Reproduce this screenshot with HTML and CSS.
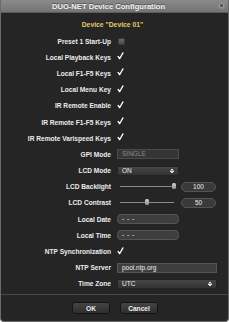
FILE: index.html
```html
<!DOCTYPE html>
<html lang="en">

<head>
  <meta charset="UTF-8">
  <meta name="viewport" content="width=device-width, initial-scale=1.0">
  <title>DUO-NET Device Configuration</title>
  <link rel="stylesheet" href="styles.css">
</head>

<body>
  <div class="window">
    <div class="titlebar">
      <span class="title">DUO-NET Device Configuration</span>
      <span class="close"></span>
    </div>
    <div class="content">
      <div class="device-name">Device "Device 01"</div>

      <div class="row">
        <label>Preset 1 Start-Up</label>
        <span class="box"></span>
      </div>
      <div class="row">
        <label>Local Playback Keys</label>
        <svg class="check" viewBox="0 0 8 9"><path d="M1.2 5 L3 7.6 L6.8 1" /></svg>
      </div>
      <div class="row">
        <label>Local F1-F5 Keys</label>
        <svg class="check" viewBox="0 0 8 9"><path d="M1.2 5 L3 7.6 L6.8 1" /></svg>
      </div>
      <div class="row">
        <label>Local Menu Key</label>
        <svg class="check" viewBox="0 0 8 9"><path d="M1.2 5 L3 7.6 L6.8 1" /></svg>
      </div>
      <div class="row">
        <label>IR Remote Enable</label>
        <svg class="check" viewBox="0 0 8 9"><path d="M1.2 5 L3 7.6 L6.8 1" /></svg>
      </div>
      <div class="row">
        <label>IR Remote F1-F5 Keys</label>
        <svg class="check" viewBox="0 0 8 9"><path d="M1.2 5 L3 7.6 L6.8 1" /></svg>
      </div>
      <div class="row">
        <label>IR Remote Varispeed Keys</label>
        <svg class="check" viewBox="0 0 8 9"><path d="M1.2 5 L3 7.6 L6.8 1" /></svg>
      </div>

      <div class="row">
        <label>GPI Mode</label>
        <div class="field short disabled">SINGLE</div>
      </div>
      <div class="row">
        <label>LCD Mode</label>
        <div class="field short select">ON<span class="arrows"></span></div>
      </div>
      <div class="row">
        <label>LCD Backlight</label>
        <div class="slider"><span class="thumb" style="left: 100%"></span></div>
        <div class="value">100</div>
      </div>
      <div class="row">
        <label>LCD Contrast</label>
        <div class="slider"><span class="thumb" style="left: 50%"></span></div>
        <div class="value">50</div>
      </div>
      <div class="row">
        <label>Local Date</label>
        <div class="field short round">- - -</div>
      </div>
      <div class="row">
        <label>Local Time</label>
        <div class="field short round">- - -</div>
      </div>
      <div class="row">
        <label>NTP Synchronization</label>
        <svg class="check" viewBox="0 0 8 9"><path d="M1.2 5 L3 7.6 L6.8 1" /></svg>
      </div>
      <div class="row">
        <label>NTP Server</label>
        <div class="field long">pool.ntp.org</div>
      </div>
      <div class="row">
        <label>Time Zone</label>
        <div class="field long select">UTC<span class="arrows"></span></div>
      </div>
    </div>
    <div class="footer">
      <button>OK</button>
      <button>Cancel</button>
    </div>
  </div>
</body>

</html>
```

FILE: styles.css
```css
body {
  margin: 0;
  padding: 0;
  background-color: #ffffff;
  font-family: 'Liberation Sans', Arial, sans-serif;
}

.window {
  width: 229px;
  height: 322px;
  box-sizing: border-box;
  background-color: #252525;
  border: 1px solid #6a6a6a;
  border-top: none;
  border-radius: 0 0 4px 4px;
  display: flex;
  flex-direction: column;
  overflow: hidden;
}

.titlebar {
  height: 12px;
  background: linear-gradient(#8a8a8a, #747474);
  border-bottom: 1px solid #5a5a5a;
  display: flex;
  align-items: center;
  justify-content: center;
  position: relative;
}

.title {
  color: #f2f2f2;
  font-size: 7.6px;
  font-weight: bold;
  text-shadow: 0 -1px 0 #555;
  margin-left: -12px;
}

.close {
  position: absolute;
  right: 3px;
  top: 2px;
  width: 7px;
  height: 7px;
  border-radius: 50%;
  background: radial-gradient(#5c5c5c 35%, #9a9a9a 40%, #6c6c6c 100%);
}

.content {
  flex: 1;
}

.device-name {
  color: #e4c96a;
  font-size: 6.8px;
  font-weight: bold;
  text-align: center;
  padding-top: 8px;
  height: 12px;
  line-height: 8px;
  margin-left: -4px;
}

.row {
  display: flex;
  align-items: center;
  height: 16.2px;
}

.row label {
  width: 110px;
  text-align: right;
  color: #ececec;
  font-size: 6.6px;
  font-weight: bold;
  padding-right: 6px;
  white-space: nowrap;
}

.box {
  width: 5px;
  height: 5px;
  margin-left: 1px;
  background: linear-gradient(#6a6a6a, #4a4a4a);
  border: 1px solid #3a3a3a;
  border-radius: 1px;
}

.check {
  width: 7px;
  height: 8px;
  margin-top: -2px;
}

.check path {
  fill: none;
  stroke: #ffffff;
  stroke-width: 1.5;
  stroke-linecap: round;
  stroke-linejoin: round;
}

.field {
  box-sizing: border-box;
  height: 10px;
  line-height: 8px;
  padding-left: 4px;
  font-size: 6.5px;
  color: #eeeeee;
  background-color: #3e3e3e;
  border: 1px solid #555;
  position: relative;
}

.short {
  width: 62px;
}

.long {
  width: 100px;
}

.disabled {
  color: #8a8a8a;
  background-color: #353535;
  border-color: #4a4a4a;
}

.select {
  border-radius: 2px;
  background: linear-gradient(#464646, #333);
  border-color: #222;
}

.round {
  border-radius: 4px;
  letter-spacing: 0.5px;
}

.arrows {
  position: absolute;
  right: 4px;
  top: 1px;
  width: 4px;
  height: 6px;
  background:
    linear-gradient(to bottom right, transparent 50%, #ddd 50%) left top / 2px 2.5px no-repeat,
    linear-gradient(to bottom left, transparent 50%, #ddd 50%) right top / 2px 2.5px no-repeat,
    linear-gradient(to top right, transparent 50%, #ddd 50%) left bottom / 2px 2.5px no-repeat,
    linear-gradient(to top left, transparent 50%, #ddd 50%) right bottom / 2px 2.5px no-repeat;
}

.slider {
  width: 54px;
  height: 1px;
  margin-left: 3px;
  background-color: #8a8a8a;
  position: relative;
}

.thumb {
  position: absolute;
  top: -3px;
  width: 4px;
  height: 6px;
  margin-left: -2px;
  border-radius: 1.5px;
  background: linear-gradient(#cfcfcf, #8c8c8c);
}

.value {
  box-sizing: border-box;
  width: 35px;
  height: 10px;
  line-height: 8px;
  margin-left: 7px;
  text-align: center;
  font-size: 6.5px;
  color: #eeeeee;
  background-color: #3a3a3a;
  border: 1px solid #555;
  border-radius: 5px;
}

.footer {
  height: 26px;
  border-top: 1px solid #484848;
  display: flex;
  justify-content: center;
  align-items: center;
  gap: 10px;
  padding-left: 1px;
  margin-top: 2px;
}

.footer button {
  width: 38px;
  height: 12px;
  padding: 0;
  font-family: 'Liberation Sans', Arial, sans-serif;
  font-size: 6.6px;
  font-weight: bold;
  color: #eeeeee;
  background: linear-gradient(#444, #2e2e2e);
  border: 1px solid #151515;
  border-radius: 3px;
}
```
